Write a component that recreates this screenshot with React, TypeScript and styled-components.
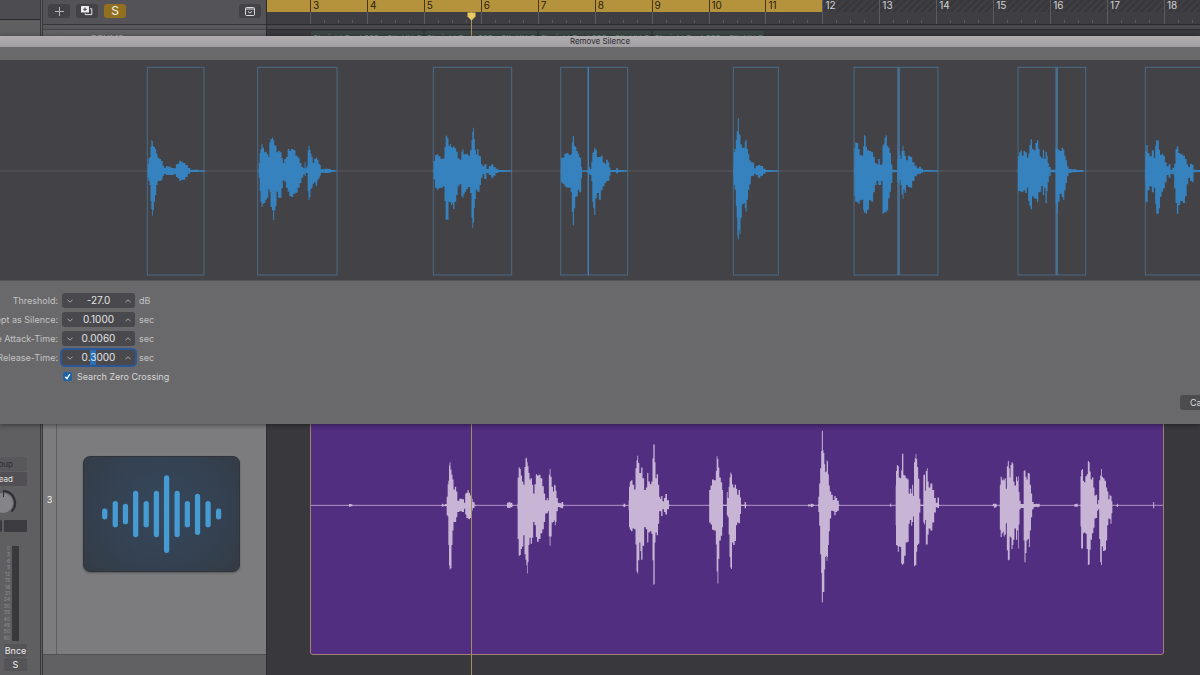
import React, { useEffect, useRef } from "react";
import styled, { createGlobalStyle } from "styled-components";

/* ---------- data ---------- */

/** One wave burst: origin x, then flat triples of dx, height above and height below the zero line. */
type Burst = { x: number; pts: number[] };

const previewBursts: Burst[] = [
  { x: 0, pts: [500, 1, 1, 504, 4, 4, 516, 4, 3, 520, 1, 1] },
  {
    x: 390,
    pts: [52, 4, 4, 54, 22, 20, 57, 38, 30, 60, 42, 42, 63, 72, 90, 65, 92, 115, 67, 90, 134, 70, 75, 118, 73, 72, 92, 77, 66, 72, 80, 52, 42, 85, 40, 30, 90, 36, 30, 96, 30, 26, 100, 16, 14, 104, 10, 9, 112, 14, 12, 120, 13, 12, 126, 9, 12, 135, 8, 10, 140, 20, 18, 145, 22, 22, 150, 31, 30, 155, 28, 27, 162, 24, 26, 170, 18, 18, 177, 9, 8, 184, 4, 3, 224, 2, 2],
  },
  {
    x: 390,
    pts: [385, 6, 6, 388, 24, 20, 390, 55, 60, 393, 66, 92, 396, 80, 107, 400, 70, 98, 404, 56, 96, 408, 58, 86, 413, 50, 80, 417, 42, 54, 419, 86, 62, 424, 96, 108, 428, 100, 118, 431, 93, 147, 434, 78, 118, 438, 76, 106, 441, 56, 62, 447, 60, 80, 452, 56, 80, 457, 38, 52, 460, 24, 28, 466, 36, 32, 470, 42, 50, 476, 66, 62, 480, 60, 75, 486, 66, 78, 493, 62, 68, 500, 46, 65, 506, 40, 50, 512, 24, 36, 517, 12, 20, 522, 8, 10, 526, 26, 15, 528, 8, 5, 532, 14, 6, 534, 62, 60, 537, 76, 86, 540, 64, 78, 543, 52, 55, 546, 42, 50, 550, 24, 38, 555, 36, 34, 559, 40, 44, 564, 34, 28, 567, 22, 22, 571, 18, 14, 574, 5, 5, 590, 7, 6, 600, 6, 5, 606, 3, 3, 620, 2, 2],
  },
  {
    x: 1260,
    pts: [40, 6, 6, 42, 30, 25, 48, 48, 50, 52, 50, 56, 58, 44, 52, 65, 36, 50, 72, 38, 46, 75, 72, 90, 79, 106, 146, 84, 98, 146, 87, 74, 92, 91, 80, 94, 95, 72, 102, 98, 70, 96, 101, 74, 114, 106, 68, 92, 111, 58, 72, 115, 38, 46, 122, 34, 40, 126, 58, 76, 129, 65, 80, 132, 50, 68, 137, 50, 62, 141, 52, 54, 147, 46, 48, 153, 62, 66, 156, 92, 140, 158, 118, 171, 161, 130, 155, 163, 96, 110, 166, 64, 84, 169, 50, 56, 174, 66, 62, 177, 46, 62, 181, 44, 42, 185, 20, 20, 190, 14, 10, 196, 20, 24, 203, 6, 6, 210, 15, 12, 217, 20, 20, 223, 12, 14, 230, 7, 6, 240, 3, 3, 275, 2, 2],
  },
  {
    x: 1260,
    pts: [422, 5, 5, 424, 40, 34, 430, 40, 38, 436, 52, 46, 442, 54, 50, 450, 48, 50, 454, 50, 64, 457, 86, 122, 460, 105, 163, 464, 76, 112, 467, 72, 78, 471, 60, 76, 476, 52, 56, 479, 42, 64, 482, 38, 64, 485, 12, 22, 487, 2, 2, 505, 2, 3, 508, 12, 10, 512, 6, 12, 516, 28, 30, 518, 54, 92, 521, 58, 112, 524, 70, 132, 528, 64, 82, 533, 42, 66, 540, 42, 86, 545, 46, 58, 551, 26, 46, 556, 22, 36, 561, 34, 30, 566, 26, 30, 570, 10, 14, 573, 3, 3, 585, 3, 3, 591, 8, 7, 598, 3, 3, 622, 2, 2],
  },
  {
    x: 2160,
    pts: [40, 15, 15, 42, 56, 42, 46, 66, 56, 49, 94, 106, 51, 118, 140, 53, 120, 196, 54, 160, 206, 56, 158, 205, 57, 112, 176, 60, 108, 190, 63, 80, 140, 68, 70, 100, 73, 70, 96, 76, 88, 112, 78, 94, 122, 82, 66, 86, 86, 50, 56, 90, 32, 40, 95, 26, 16, 100, 25, 14, 105, 8, 8, 110, 15, 12, 117, 18, 20, 125, 15, 14, 133, 7, 8, 140, 3, 3, 175, 2, 2],
  },
  {
    x: 2160,
    pts: [402, 10, 10, 404, 68, 76, 407, 86, 92, 412, 84, 94, 417, 66, 98, 421, 48, 88, 428, 46, 86, 431, 74, 118, 433, 108, 126, 436, 104, 122, 438, 72, 128, 444, 62, 116, 450, 60, 88, 457, 56, 92, 462, 42, 64, 467, 24, 42, 472, 20, 30, 478, 36, 42, 481, 18, 42, 486, 20, 30, 489, 76, 128, 492, 82, 126, 495, 100, 122, 499, 107, 124, 502, 76, 118, 507, 70, 82, 511, 54, 62, 515, 20, 36, 519, 4, 4, 531, 3, 3, 533, 36, 34, 536, 66, 36, 540, 48, 26, 543, 36, 42, 546, 60, 70, 549, 76, 83, 552, 60, 56, 556, 46, 66, 560, 32, 42, 567, 46, 48, 573, 42, 50, 580, 26, 30, 587, 16, 16, 594, 8, 10, 600, 13, 8, 606, 7, 5, 612, 3, 2, 655, 2, 2],
  },
  {
    x: 3000,
    pts: [53, 5, 5, 55, 44, 60, 60, 56, 60, 63, 62, 64, 68, 46, 62, 73, 60, 58, 78, 56, 66, 83, 40, 50, 86, 52, 90, 90, 78, 104, 94, 95, 115, 98, 66, 76, 104, 62, 82, 109, 84, 84, 113, 92, 94, 117, 66, 64, 121, 44, 62, 126, 38, 45, 131, 64, 72, 134, 36, 50, 139, 58, 96, 142, 46, 60, 144, 24, 34, 149, 12, 14, 155, 4, 4, 166, 4, 4, 168, 72, 100, 172, 66, 126, 176, 64, 92, 182, 60, 68, 188, 70, 78, 191, 64, 86, 195, 46, 58, 199, 32, 36, 203, 14, 16, 208, 6, 6, 220, 5, 4, 240, 3, 3, 258, 1, 1],
  },
  {
    x: 3000,
    pts: [435, 10, 30, 437, 60, 90, 441, 78, 94, 445, 54, 58, 452, 44, 46, 459, 62, 64, 464, 40, 50, 467, 76, 98, 470, 92, 128, 475, 92, 128, 478, 64, 112, 482, 48, 78, 487, 52, 62, 492, 46, 52, 497, 26, 34, 503, 14, 12, 509, 20, 20, 514, 3, 8, 520, 10, 10, 525, 22, 52, 528, 66, 96, 533, 74, 128, 537, 54, 102, 545, 50, 90, 552, 46, 96, 558, 36, 76, 562, 20, 40, 567, 12, 20, 573, 22, 30, 578, 18, 34, 583, 4, 4, 600, 3, 3],
  },
];

const regionBursts: Burst[] = [
  { x: 357, pts: [-244, 1, 1, -242, 4, 4, -234, 3, 3, -232, 1, 1] },
  {
    x: 357,
    pts: [34, 1, 1, 38, 5, 4, 42, 2, 2, 48, 4, 3, 52, 26, 30, 54, 64, 34, 56, 74, 120, 58, 120, 182, 60, 130, 194, 63, 108, 190, 66, 92, 120, 69, 78, 76, 72, 48, 50, 77, 56, 50, 80, 42, 36, 84, 14, 20, 92, 20, 18, 100, 18, 20, 104, 8, 10, 107, 36, 28, 111, 38, 38, 114, 46, 40, 118, 38, 42, 122, 30, 38, 126, 20, 16, 130, 10, 8, 137, 2, 2],
  },
  { x: 357, pts: [230, 2, 2, 232, 8, 7, 238, 9, 8, 244, 8, 6, 250, 2, 2] },
  {
    x: 357,
    pts: [262, 5, 10, 264, 84, 102, 268, 114, 152, 271, 110, 150, 274, 90, 132, 278, 72, 124, 282, 62, 90, 285, 116, 148, 288, 142, 164, 290, 144, 180, 292, 130, 206, 294, 118, 172, 297, 98, 120, 300, 78, 98, 304, 82, 116, 308, 62, 98, 311, 36, 50, 316, 64, 60, 319, 94, 96, 323, 90, 110, 329, 92, 102, 334, 82, 84, 340, 58, 72, 343, 36, 50, 348, 15, 25, 352, 22, 24, 355, 15, 18, 358, 92, 94, 360, 110, 122, 363, 86, 94, 367, 56, 52, 371, 42, 50, 373, 62, 46, 376, 60, 60, 378, 44, 50, 381, 22, 18, 386, 8, 5, 392, 6, 7, 397, 10, 9, 402, 2, 2],
  },
  { x: 357, pts: [578, 1, 1, 583, 5, 5, 588, 1, 1] },
  {
    x: 357,
    pts: [596, 15, 15, 598, 56, 66, 601, 72, 74, 605, 76, 78, 610, 62, 70, 615, 48, 72, 618, 112, 118, 621, 136, 200, 623, 150, 206, 626, 128, 166, 630, 98, 112, 632, 98, 138, 635, 114, 164, 640, 82, 122, 645, 46, 66, 650, 54, 72, 653, 98, 112, 657, 72, 82, 662, 64, 78, 666, 72, 86, 669, 142, 166, 671, 184, 240, 673, 184, 238, 675, 130, 112, 678, 82, 82, 682, 94, 90, 686, 62, 56, 689, 26, 18, 692, 20, 18, 695, 28, 32, 700, 12, 12, 704, 22, 20, 708, 34, 28, 714, 15, 12, 720, 2, 2],
  },
  {
    x: 1137,
    pts: [57, 2, 2, 58, 46, 52, 65, 60, 58, 67, 78, 74, 76, 76, 76, 79, 104, 118, 81, 148, 200, 84, 140, 236, 86, 114, 162, 90, 84, 106, 95, 70, 92, 98, 46, 66, 100, 2, 2, 110, 2, 2, 111, 40, 30, 115, 22, 36, 117, 56, 88, 120, 84, 156, 122, 99, 188, 125, 94, 192, 127, 64, 112, 132, 54, 120, 136, 62, 108, 140, 50, 60, 143, 32, 52, 148, 46, 54, 152, 24, 26, 154, 2, 2, 162, 2, 2, 166, 10, 9, 170, 2, 2],
  },
  { x: 1137, pts: [354, 1, 1, 356, 4, 4, 360, 2, 2, 364, 5, 5, 371, 3, 3, 372, 1, 1] },
  {
    x: 1137,
    pts: [384, 4, 4, 386, 26, 20, 389, 66, 62, 392, 112, 148, 395, 164, 204, 396, 225, 292, 398, 225, 294, 399, 166, 262, 402, 158, 262, 404, 124, 194, 407, 100, 156, 409, 102, 152, 411, 136, 168, 413, 132, 156, 415, 94, 120, 418, 60, 78, 421, 42, 40, 426, 32, 16, 431, 16, 18, 435, 28, 30, 439, 22, 20, 444, 14, 16, 449, 2, 2],
  },
  { x: 1137, pts: [599, 1, 1, 602, 5, 4, 605, 1, 1] },
  {
    x: 1137,
    pts: [617, 60, 60, 619, 104, 120, 622, 122, 122, 625, 118, 140, 628, 84, 124, 632, 82, 126, 635, 106, 176, 637, 156, 180, 639, 156, 178, 641, 92, 176, 644, 90, 152, 650, 82, 112, 655, 78, 110, 657, 36, 56, 662, 50, 44, 665, 36, 62, 668, 62, 50, 671, 28, 34, 673, 130, 184, 676, 142, 182, 678, 156, 180, 680, 140, 140, 683, 116, 120, 686, 80, 116, 690, 20, 22, 692, 2, 2, 699, 2, 2, 701, 92, 52, 704, 92, 58, 706, 44, 44, 709, 104, 118, 712, 112, 118, 714, 72, 88, 718, 54, 70, 724, 66, 76, 730, 46, 52, 735, 22, 22, 740, 8, 6, 745, 24, 8, 749, 2, 2],
  },
  { x: 1947, pts: [97, 1, 1, 100, 5, 3, 104, 5, 7, 109, 5, 6, 111, 1, 1] },
  {
    x: 1947,
    pts: [119, 4, 4, 120, 62, 74, 124, 86, 96, 127, 76, 84, 130, 80, 80, 132, 76, 94, 136, 82, 88, 139, 50, 54, 142, 118, 136, 145, 134, 166, 148, 112, 164, 150, 84, 94, 153, 122, 98, 156, 130, 132, 159, 126, 120, 161, 72, 104, 166, 60, 70, 170, 86, 104, 173, 74, 76, 175, 88, 130, 177, 40, 58, 180, 14, 12, 184, 4, 8, 190, 4, 8, 192, 104, 106, 195, 106, 172, 198, 86, 144, 201, 78, 106, 205, 98, 102, 208, 96, 126, 211, 62, 76, 215, 36, 36, 218, 10, 12, 224, 4, 5, 230, 5, 4, 233, 4, 6, 238, 5, 4, 240, 1, 1],
  },
  { x: 1947, pts: [342, 1, 1, 345, 4, 4, 352, 5, 4, 354, 1, 1] },
  {
    x: 1947,
    pts: [361, 4, 4, 362, 88, 64, 365, 106, 130, 368, 110, 130, 370, 74, 84, 374, 70, 82, 378, 88, 86, 382, 94, 132, 385, 134, 180, 388, 130, 178, 390, 102, 134, 394, 78, 104, 398, 84, 84, 402, 54, 68, 405, 30, 40, 410, 32, 38, 413, 3, 16, 416, 16, 12, 419, 76, 102, 422, 90, 172, 424, 110, 180, 427, 86, 124, 431, 82, 138, 436, 74, 136, 440, 54, 106, 443, 42, 60, 447, 18, 40, 450, 32, 42, 453, 28, 56, 456, 12, 24, 458, 2, 2],
  },
  { x: 1947, pts: [469, 1, 1, 472, 5, 5, 475, 1, 1] },
  { x: 1947, pts: [579, 1, 1, 580, 10, 9, 582, 10, 9, 583, 1, 1] },
];

const silenceBoxes = [
  [442, 170],
  [773, 238],
  [1300, 235],
  [1682, 83],
  [1765, 118],
  [2200, 135],
  [2562, 132],
  [2696, 118],
  [3054, 115],
  [3171, 86],
  [3436, 300],
];

const iconBars = [
  [63, 156, 33],
  [95, 133, 80],
  [126, 141, 63],
  [157, 102, 141],
  [189, 133, 80],
  [220, 102, 141],
  [251, 55, 236],
  [283, 102, 141],
  [314, 133, 80],
  [345, 111, 125],
  [377, 133, 80],
  [409, 156, 33],
];

const bars = [3, 4, 5, 6, 7, 8, 9, 10, 11, 12, 13, 14, 15, 16, 17];
const meterScale = ["0", "3", "6", "9", "12", "15", "18", "21", "24", "30", "35", "40", "45", "50", "60"];

const fields = [
  { id: "threshold", label: "Threshold:", value: "-27.0", unit: "dB" },
  { id: "silence", label: "Minimum Time to accept as Silence:", value: "0.1000", unit: "sec" },
  { id: "attack", label: "Pre Attack-Time:", value: "0.0060", unit: "sec" },
  { id: "release", label: "Post Release-Time:", value: "0.3000", unit: "sec" },
];

/** Outlines a burst as sample columns: each level is held up to the midpoint to the next one. */
function burstPath({ x, pts }: Burst, zero: number) {
  const last = pts.length - 3;
  const mid = (i: number) => x + (pts[i] + pts[i + 3]) / 2;
  let d = `M${x + pts[0]} ${zero}`;
  for (let i = 0; i <= last; i += 3) {
    d += `V${zero - pts[i + 1]}H${i < last ? mid(i) : x + pts[i]}`;
  }
  for (let i = last; i >= 0; i -= 3) {
    d += `V${zero + pts[i + 2]}H${i > 0 ? mid(i - 3) : x + pts[0]}`;
  }
  return `${d}Z`;
}

/* ---------- styles ---------- */

const GlobalStyle = createGlobalStyle`
  *, *::before, *::after { box-sizing: border-box; }
  body {
    margin: 0;
    background: #39383c;
    color: #dcdcde;
    font-family: Inter, "Liberation Sans", sans-serif;
    font-size: 9px;
    line-height: 12px;
  }
  button, input { font: inherit; color: inherit; }
`;

const Page = styled.main`
  position: relative;
  display: grid;
  grid-template-columns: 43px 224px minmax(0, 1fr);
  min-height: 100vh;
  overflow: hidden;
`;

/* channel strip */

const Inspector = styled.aside`
  display: flex;
  flex-direction: column;
  background: #5f5e61;
  border-right: 3px double #39393c;
  overflow: hidden;
`;

const InspectorTop = styled.div`
  height: 20px;
  background: #4d4c50;
  border-bottom: 1px solid #29292c;
`;

const Strip = styled.div`
  display: flex;
  flex-direction: column;
  width: 27px;
  margin-top: auto;
  padding-bottom: 4px;
`;

const StripSlot = styled.button<{ $dim?: boolean }>`
  display: flex;
  justify-content: flex-end;
  height: 14px;
  margin-bottom: 1px;
  padding: 0 14px 0 0;
  border: 0;
  border-radius: 2px;
  background: ${(p) => (p.$dim ? "#58575a" : "#514f53")};
  color: ${(p) => (p.$dim ? "#2f2e31" : "#e2e2e4")};
  font-size: 8px;
  line-height: 14px;
`;

const Knob = styled.svg`
  width: 20px;
  height: 32px;
`;

const Readouts = styled.div`
  display: grid;
  grid-template-columns: 2px 23px;
  gap: 2px;
  height: 12px;
  margin: 1px 0 14px;

  span { background: #3c3b3f; border-radius: 1px; }
`;

const Meter = styled.div`
  display: grid;
  grid-template-columns: 10px 7px;
  gap: 2px;
  height: 95px;
`;

const MeterScale = styled.div`
  display: flex;
  flex-direction: column;
  justify-content: space-between;
  text-align: right;
  color: #8f8e91;
  font-size: 5px;
  line-height: 5px;
`;

const MeterBar = styled.div`
  background: #39393c;
`;

const StripButton = styled.button`
  height: 13px;
  margin: 3px 0 0 4px;
  padding: 0;
  border: 0;
  border-radius: 2px;
  background: #545356;
  color: #ececee;
  font-size: 9px;
  line-height: 13px;

  & + & { margin-top: 1px; }
`;

/* track headers */

const Headers = styled.section`
  display: flex;
  flex-direction: column;
  border-right: 1px solid #2e2d31;
  background: #616063;
`;

const Toolbar = styled.div`
  display: flex;
  gap: 6px;
  height: 25px;
  padding: 4px 5px;
  background: #545357;
  border-bottom: 1px solid #363539;
`;

const ToolButton = styled.button<{ $on?: boolean; $last?: boolean }>`
  display: flex;
  align-items: center;
  justify-content: center;
  width: 22px;
  height: 14px;
  margin-left: ${(p) => (p.$last ? "auto" : "0")};
  padding: 0;
  border: 0;
  border-radius: 3px;
  background: ${(p) => (p.$on ? "#93701f" : "#434246")};
  color: #f1f0f1;
  font-size: 12px;
`;

const HeaderGap = styled.div`
  height: 5px;
  background: #58575a;
  border-bottom: 1px solid #454448;
`;

const TrackHeader = styled.div<{ $height: number; $selected?: boolean }>`
  display: grid;
  grid-template-columns: 14px minmax(0, 1fr);
  height: ${(p) => p.$height}px;
  background: ${(p) => (p.$selected ? "#7c7b7d" : "#616063")};
  border-bottom: 1px solid #525154;
`;

const TrackNumber = styled.div`
  padding-top: 139px;
  border-right: 1px solid #5f5e61;
  text-align: center;
  color: #f2f2f2;
`;

const TrackBody = styled.div<{ $icon?: boolean }>`
  padding: ${(p) => (p.$icon ? "101px 26px 0" : "4px 34px 0")};
  color: #a9a8ab;
  line-height: 10px;
`;

const TrackIcon = styled.div`
  height: 116px;
  border: 1px solid #2f343c;
  border-radius: 7px;
  background: radial-gradient(circle at 50% 45%, #35485d, #34404f 65%, #343a44);
  box-shadow: 0 1px 2px #58575a;

  svg { display: block; width: 100%; height: 100%; }
`;

/* timeline */

const Timeline = styled.section`
  position: relative;
  display: flex;
  flex-direction: column;
  min-width: 0;
  background: #39383c;
`;

const Columns = styled.div`
  display: grid;
  grid-template-columns: 43px minmax(0, 1fr) 36px;
`;

const Ruler = styled(Columns)`
  height: 25px;
  background:
    linear-gradient(#3f3e42, #3f3e42) 0 12px / 100% 13px no-repeat,
    repeating-linear-gradient(135deg, #39383c 0 3px, #403f43 3px 5px);
  border-bottom: 1px solid #2b2a2e;
`;

const LoopLead = styled.div`
  height: 12px;
  background: #b5923c;
`;

const BarGrid = styled.div`
  display: grid;
  grid-template-columns: repeat(15, minmax(0, 1fr));
`;

const Bar = styled.div<{ $loop?: boolean }>`
  height: 24px;
  border-left: 1px solid #5c5b5f;
  background:
    linear-gradient(90deg, transparent 13px, #5c5b5f 13px 14px, transparent 14px 27px, #5c5b5f 27px 28px, transparent 28px 41px, #5c5b5f 41px 42px, transparent 42px) 0 20px / 100% 3px no-repeat;

  span {
    display: block;
    height: 12px;
    margin-left: -1px;
    padding-left: 2px;
    border-left: 1px solid ${(p) => (p.$loop ? "#453716" : "#5c5b5f")};
    background: ${(p) => (p.$loop ? "#b5923c" : "transparent")};
    color: ${(p) => (p.$loop ? "#2b2210" : "#d3d2d5")};
    font-size: 10px;
    line-height: 11px;
  }
`;

const RulerGap = styled.div`
  height: 5px;
  background: #49484c;
  border-bottom: 1px solid #2b2a2e;
`;

const Lane = styled(Columns)<{ $height: number }>`
  height: ${(p) => p.$height}px;
`;

const BeatRow = styled.div`
  grid-column: 2;
  display: grid;
  grid-template-columns: repeat(4, minmax(0, 2fr)) minmax(0, 7fr);
  align-items: start;
`;

const Beat = styled.div`
  height: 60px;
  padding: 2px;
  border-radius: 2px;
  border: 1px solid #34393a;
  background: #3c4644;
  color: #6f9482;
  font-size: 8px;
  line-height: 10px;
  white-space: nowrap;
  overflow: hidden;
`;

const Region = styled.div`
  grid-column: 2;
  border: 1px solid #a3806f;
  border-radius: 3px;
  background: #512e80;
  overflow: hidden;

  svg { display: block; width: 100%; height: 100%; }
`;

const Playhead = styled.div`
  position: absolute;
  top: 12px;
  bottom: 0;
  left: calc(43px + (100% - 79px) * 0.1886);
  width: 1px;
  background: #a88e5c;

  svg {
    position: absolute;
    top: 0;
    left: -4px;
    width: 9px;
    height: 9px;
  }
`;

/* dialog */

const Dialog = styled.section`
  position: absolute;
  top: 36px;
  left: 0;
  right: 0;
  background: #69696b;
  box-shadow: 0 1px 5px rgba(0, 0, 0, 0.45);
  overflow: hidden;
`;

const TitleBar = styled.h1`
  height: 11px;
  margin: 0;
  background: linear-gradient(#b0adb0, #a3a0a3);
  color: #2c2b2d;
  font-size: 8px;
  font-weight: 400;
  line-height: 11px;
  text-align: center;
`;

const DialogBar = styled.div`
  height: 13px;
  background: #69686a;
`;

const Preview = styled.svg`
  display: block;
  width: 100%;
  height: 221px;
  background: #434347;
  border-bottom: 1px solid #555457;
`;

const Form = styled.form`
  display: flex;
  flex-direction: column;
  gap: 4px;
  padding: 12px 0 14px;
  color: #c3c3c5;
`;

const FieldRow = styled.div`
  display: grid;
  grid-template-columns: 58px 73px auto;
  column-gap: 4px;
  align-items: center;
  justify-content: start;
  height: 15px;

  label {
    display: flex;
    justify-content: flex-end;
    white-space: nowrap;
  }
`;

const Stepper = styled.div`
  display: grid;
  grid-template-columns: 15px minmax(0, 1fr) 15px;
  height: 15px;
  border-radius: 3px;
  background: #49484c;

  &:focus-within { box-shadow: 0 0 0 2px #2c5796; }

  input {
    width: 100%;
    min-width: 0;
    padding: 0;
    border: 0;
    outline: 0;
    background: none;
    color: #e4e4e6;
    font-size: 10px;
    text-align: center;
    line-height: 15px;
  }

  input::selection { background: #2a6fb4; color: #e4e4e6; }

  button {
    display: flex;
    align-items: center;
    justify-content: center;
    padding: 0;
    border: 0;
    background: none;
    color: #a9a9ab;
  }

  svg { width: 6px; height: 6px; }
`;

const CheckLabel = styled.label`
  display: flex;
  align-items: center;
  gap: 5px;
  height: 9px;
  margin: 3px 0 10px 63px;
  color: #d6d6d8;

  input {
    appearance: none;
    width: 9px;
    height: 9px;
    margin: 0;
    border-radius: 2px;
    background: #1d64a6 url("data:image/svg+xml,%3Csvg xmlns='http://www.w3.org/2000/svg' viewBox='0 0 9 9' fill='none' stroke='white' stroke-width='1.3'%3E%3Cpath d='M2.3 4.8 4 6.6 6.8 2.2'/%3E%3C/svg%3E");
  }
`;

const Footer = styled.div`
  display: flex;
  justify-content: flex-end;
  margin-right: -32px;
`;

const DialogButton = styled.button`
  width: 52px;
  height: 15px;
  padding: 0 0 0 10px;
  border: 0;
  border-radius: 3px;
  background: #4c4c4e;
  color: #d9d9db;
  line-height: 15px;
  text-align: left;
`;

/* ---------- components ---------- */

function Chevron({ up }: { up?: boolean }) {
  return (
    <svg viewBox="0 0 6 6" fill="none" stroke="currentColor" strokeWidth="1">
      <path d={up ? "M0.500 4.200 3 1.800 5.500 4.200" : "M0.500 1.800 3 4.200 5.500 1.800"} />
    </svg>
  );
}

function ChannelStrip() {
  return (
    <Inspector>
      <InspectorTop />
      <Strip>
        <StripSlot $dim>Group</StripSlot>
        <StripSlot>Read</StripSlot>
        <Knob viewBox="0 0 20 32">
          <circle cx="3" cy="16" r="10" fill="#858487" />
          <path d="M3 4A12 12 0 0 1 11.500 24.500" fill="none" stroke="#2f2e32" strokeWidth="2" />
          <path d="M3.500 4V10" stroke="#2f2e32" strokeWidth="1" />
        </Knob>
        <Readouts>
          <span />
          <span />
        </Readouts>
        <Meter>
          <MeterScale>
            {meterScale.map((n) => (
              <span key={n}>{n}</span>
            ))}
          </MeterScale>
          <MeterBar />
        </Meter>
        <StripButton>Bnce</StripButton>
        <StripButton>S</StripButton>
      </Strip>
    </Inspector>
  );
}

function TrackHeaders() {
  return (
    <Headers>
      <Toolbar>
        <ToolButton aria-label="Add track">
          <svg width="9" height="9" viewBox="0 0 9 9" stroke="#b5b4b7" strokeWidth="1">
            <path d="M4.500 0V9M0 4.500H9" />
          </svg>
        </ToolButton>
        <ToolButton aria-label="Duplicate track">
          <svg width="12" height="10" viewBox="0 0 12 10">
            <path d="M9 2.800h1.800v5.800H4.200V7.400" fill="none" stroke="#e6e6e8" strokeWidth="1" />
            <rect width="8" height="6.600" rx="0.500" fill="#ededee" />
            <path d="M4 1.500V5.100M2.200 3.300H5.800" stroke="#434246" strokeWidth="1" />
          </svg>
        </ToolButton>
        <ToolButton $on>S</ToolButton>
        <ToolButton $last aria-label="Track options">
          <svg width="10" height="9" viewBox="0 0 10 9" fill="none" stroke="#d8d8da" strokeWidth="1">
            <rect x="0.500" y="0.500" width="9" height="8" rx="1" />
            <path d="M0.500 2H9.500M3 4.300 5 6.200 7 4.300" />
          </svg>
        </ToolButton>
      </Toolbar>
      <HeaderGap />
      <TrackHeader $height={325}>
        <TrackNumber />
        <TrackBody>DRUMS</TrackBody>
      </TrackHeader>
      <TrackHeader $height={300} $selected>
        <TrackNumber>3</TrackNumber>
        <TrackBody $icon>
          <TrackIcon>
            <svg viewBox="0 0 471 345">
              {iconBars.map(([x, y, h]) => (
                <rect key={x} x={x - 8} y={y} width="16" height={h} rx="8" fill="#459bd2" />
              ))}
            </svg>
          </TrackIcon>
        </TrackBody>
      </TrackHeader>
    </Headers>
  );
}

function Arrangement() {
  return (
    <Timeline>
      <Ruler>
        <LoopLead />
        <BarGrid>
          {bars.map((n) => (
            <Bar key={n} $loop={n < 12}>
              <span>{n}</span>
            </Bar>
          ))}
        </BarGrid>
        <Bar>
          <span>18</span>
        </Bar>
      </Ruler>
      <RulerGap />
      <Lane $height={325}>
        <BeatRow>
          {[0, 1, 2, 3].map((n) => (
            <Beat key={n}>Straight Beat 025 – 8th HH C</Beat>
          ))}
        </BeatRow>
      </Lane>
      <Lane $height={300}>
        <Region>
          <svg viewBox="0 0 2556 900" preserveAspectRatio="none">
            <path d="M0 451H2556" stroke="#b394c6" strokeWidth="3" />
            {regionBursts.map((b, i) => (
              <path key={i} d={burstPath(b, 451)} fill="#c8b5d6" />
            ))}
          </svg>
        </Region>
      </Lane>
      <Playhead>
        <svg viewBox="0 0 9 9">
          <path d="M0.500 0.500H8.500V4.500L4.500 8.500 0.500 4.500Z" fill="#ecc95f" />
        </svg>
      </Playhead>
    </Timeline>
  );
}

function RemoveSilence() {
  const release = useRef<HTMLInputElement>(null);

  useEffect(() => {
    release.current?.focus();
    release.current?.setSelectionRange(2, 3);
  }, []);

  return (
    <Dialog role="dialog" aria-labelledby="dialog-title">
      <TitleBar id="dialog-title">Remove Silence</TitleBar>
      <DialogBar />
      <Preview viewBox="0 0 3600 660" preserveAspectRatio="none">
        <path d="M0 333H3600" stroke="#5b5b5f" strokeWidth="3" />
        {silenceBoxes.map(([x, w]) => (
          <rect key={x} x={x} y="22" width={w} height="623" fill="none" stroke="#4b6a87" strokeWidth="3" />
        ))}
        <path d="M1765 22V645" stroke="#3a80bd" strokeWidth="4" />
        <path d="M2696 22V645M3170 22V645" stroke="#4a6f93" strokeWidth="7" />
        {previewBursts.map((b, i) => (
          <path key={i} d={burstPath(b, 333)} fill={i === 0 ? "#5b5b5f" : "#3682bf"} />
        ))}
      </Preview>
      <Form onSubmit={(e) => e.preventDefault()}>
        {fields.map((f) => (
          <FieldRow key={f.id}>
            <label htmlFor={f.id}>{f.label}</label>
            <Stepper>
              <button type="button" aria-label="Decrease">
                <Chevron />
              </button>
              <input id={f.id} type="text" defaultValue={f.value} ref={f.id === "release" ? release : undefined} />
              <button type="button" aria-label="Increase">
                <Chevron up />
              </button>
            </Stepper>
            <span>{f.unit}</span>
          </FieldRow>
        ))}
        <CheckLabel>
          <input type="checkbox" defaultChecked />
          Search Zero Crossing
        </CheckLabel>
        <Footer>
          <DialogButton type="button">Cancel</DialogButton>
        </Footer>
      </Form>
    </Dialog>
  );
}

export default function App() {
  return (
    <>
      <GlobalStyle />
      <Page>
        <ChannelStrip />
        <TrackHeaders />
        <Arrangement />
        <RemoveSilence />
      </Page>
    </>
  );
}
